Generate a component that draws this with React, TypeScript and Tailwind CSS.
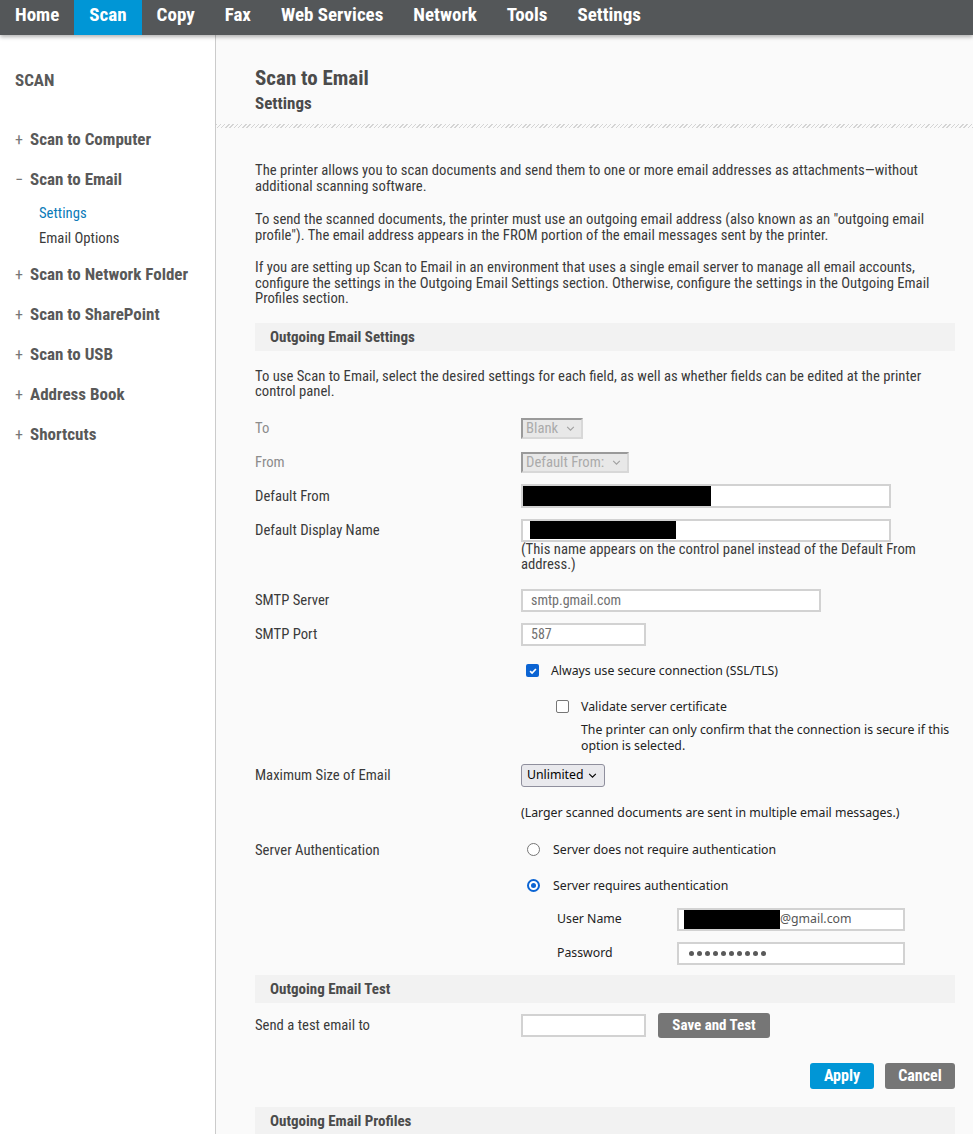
import React from 'react';

const HP: React.CSSProperties = { fontFamily: '"Roboto Condensed", "Noto Sans", "DejaVu Sans Condensed", sans-serif', fontStretch: 'condensed' };
const UI: React.CSSProperties = { fontFamily: '"Noto Sans", "Open Sans", sans-serif', fontStretch: 'normal' };

const NAV = ['Home', 'Scan', 'Copy', 'Fax', 'Web Services', 'Network', 'Tools', 'Settings'];

function Chevron({ className = '' }: { className?: string }) {
  return (
    <svg viewBox="0 0 10 6" className={className} fill="none" stroke="currentColor" strokeWidth="1.3">
      <path d="M1 1l4 4 4-4" />
    </svg>
  );
}

function DisabledSelect({ label, width }: { label: string; width: string }) {
  return (
    <div className={`flex h-[21px] items-center justify-between border-2 border-t-[#9a9a9a] border-l-[#9a9a9a] border-r-[#d8d8d8] border-b-[#d8d8d8] bg-[#e8e8e8] pl-[3px] pr-[6px] text-[14.7px] text-[#ababab] ${width}`}>
      <span>{label}</span>
      <Chevron className="h-[5px] w-[9px] text-[#a0a0a0]" />
    </div>
  );
}

function SectionBar({ title }: { title: string }) {
  return (
    <div className="flex h-[28px] items-center bg-[#f2f2f2] pl-[15px] text-[15px] font-bold text-[#4b4b4b]">
      {title}
    </div>
  );
}

function Row({ label, muted, className = '', children }: { label: string; muted?: boolean; className?: string; children?: React.ReactNode }) {
  return (
    <div className={`flex items-center ${className}`}>
      <div className={`w-[266px] shrink-0 ${muted ? 'text-[#8c8c8c]' : 'text-[#3b3b3b]'}`}>{label}</div>
      {children}
    </div>
  );
}

function Checkbox({ checked }: { checked?: boolean }) {
  return checked ? (
    <span className="flex h-[13px] w-[13px] items-center justify-center rounded-[2px] bg-[#0b64d3]">
      <svg viewBox="0 0 12 12" className="h-[10px] w-[10px]" fill="none" stroke="white" strokeWidth="2">
        <path d="M2.5 6.2l2.4 2.4 4.6-5" />
      </svg>
    </span>
  ) : (
    <span className="h-[13px] w-[13px] rounded-[2px] border border-[#767676] bg-white" />
  );
}

function Radio({ checked }: { checked?: boolean }) {
  return checked ? (
    <span className="flex h-[13px] w-[13px] items-center justify-center rounded-full border-2 border-[#0b64d3] bg-white">
      <span className="h-[5px] w-[5px] rounded-full bg-[#0b64d3]" />
    </span>
  ) : (
    <span className="h-[13px] w-[13px] rounded-full border border-[#767676] bg-white" />
  );
}

const SIDE = [
  { label: 'Scan to Computer' },
  { label: 'Scan to Email', open: true },
  { label: 'Scan to Network Folder' },
  { label: 'Scan to SharePoint' },
  { label: 'Scan to USB' },
  { label: 'Address Book' },
  { label: 'Shortcuts' },
];

export default function App() {
  return (
    <div className="min-h-[1134px] bg-[#fafafa] text-[14.7px] text-[#3b3b3b]" style={HP}>
      {/* top nav */}
      <div className="relative z-10 flex h-[35px] bg-[#545759] shadow-[0_2px_4px_rgba(0,0,0,0.3)]">
        {NAV.map(n => (
          <div key={n}
            className={`flex items-center px-[15px] pb-[5px] text-[19px] font-bold text-white ${n === 'Scan' ? 'bg-[#0096d6]' : ''}`}>
            {n}
          </div>
        ))}
      </div>

      <div className="flex">
        {/* sidebar */}
        <div className="min-h-[1099px] w-[216px] shrink-0 border-r border-[#cbcbcb] bg-white pl-[15px] pt-[34px]">
          <div className="text-[17px] font-bold leading-[22px] text-[#595959]">SCAN</div>
          <div className="mt-[29px]">
            {SIDE.map(s => (
              <div key={s.label}>
                <div className="flex h-[40px] items-center whitespace-nowrap text-[17px] font-bold text-[#595959]">
                  <span className="mr-[5px] w-[10px] text-[16px] font-normal text-[#777]">{s.open ? '−' : '+'}</span>
                  {s.label}
                </div>
                {s.open && (
                  <div className="mb-[5px] pl-[24px]">
                    <div className="flex h-[25px] items-center pt-[2px] text-[#0a7ab8]">Settings</div>
                    <div className="flex h-[25px] items-center pt-[2px] text-[#3b3b3b]">Email Options</div>
                  </div>
                )}
              </div>
            ))}
          </div>
        </div>

        {/* main */}
        <div className="min-w-0 flex-1">
          <div className="px-[39px] pt-[29px]">
            <h1 className="text-[21px] font-bold leading-[28px] text-[#4b4b4b]">Scan to Email</h1>
            <h2 className="text-[17px] font-bold leading-[22px] text-[#4b4b4b]">Settings</h2>
          </div>
          <div className="mt-[10px] h-[4px] bg-[repeating-linear-gradient(135deg,#d4d4d4_0px,#d4d4d4_1px,transparent_1px,transparent_3px)]" />

          <div className="pl-[39px] pr-[18px] pt-[34px] leading-[16px]">
            <p>The printer allows you to scan documents and send them to one or more email addresses as attachments—without additional scanning software.</p>
            <p className="mt-[17px]">To send the scanned documents, the printer must use an outgoing email address (also known as an "outgoing email profile"). The email address appears in the FROM portion of the email messages sent by the printer.</p>
            <p className="mt-[17px] leading-[15.5px]">If you are setting up Scan to Email in an environment that uses a single email server to manage all email accounts, configure the settings in the Outgoing Email Settings section. Otherwise, configure the settings in the Outgoing Email Profiles section.</p>

            <div className="mt-[16px]"><SectionBar title="Outgoing Email Settings" /></div>

            <p className="mt-[18px] leading-[15.5px]">To use Scan to Email, select the desired settings for each field, as well as whether fields can be edited at the printer control panel.</p>

            <Row label="To" muted className="mt-[18px] h-[21px]">
              <DisabledSelect label="Blank" width="w-[62px]" />
            </Row>
            <Row label="From" muted className="mt-[13px] h-[21px]">
              <DisabledSelect label="Default From:" width="w-[108px]" />
            </Row>
            <Row label="Default From" className="mt-[11px] h-[24px]">
              <div className="flex h-[24px] w-[370px] border-2 border-[#d2d2d2] bg-white">
                <div className="h-full w-[188px] bg-black" />
              </div>
            </Row>
            <Row label="Default Display Name" className="mt-[11px] h-[23px]">
              <div className="flex h-[23px] w-[370px] items-center border-2 border-[#d2d2d2] bg-white pl-[7px]">
                <div className="h-[18px] w-[146px] bg-black" />
              </div>
            </Row>
            <div className="ml-[266px] leading-[15.5px]">(This name appears on the control panel instead of the Default From address.)</div>

            <Row label="SMTP Server" className="mt-[16px] h-[23px]">
              <div className="flex h-[23px] w-[300px] items-center border-2 border-[#d2d2d2] bg-white pl-[8px] text-[14px] text-[#707070]">smtp.gmail.com</div>
            </Row>
            <Row label="SMTP Port" className="mt-[11px] h-[23px]">
              <div className="flex h-[23px] w-[125px] items-center border-2 border-[#d2d2d2] bg-white pl-[8px] text-[14px] text-[#707070]">587</div>
            </Row>

            <div className="ml-[266px] mt-[15px] flex h-[20px] items-center gap-[12px] pl-[5px] text-[12.3px] text-[#222]" style={UI}>
              <Checkbox checked />
              <span>Always use secure connection (SSL/TLS)</span>
            </div>
            <div className="ml-[266px] mt-[16px] flex h-[20px] items-center gap-[12px] pl-[35px] text-[12.3px] text-[#222]" style={UI}>
              <Checkbox />
              <span>Validate server certificate</span>
            </div>
            <div className="ml-[326px] mt-[5px] text-[12.3px] leading-[16px] text-[#222]" style={UI}>
              The printer can only confirm that the connection is secure if this option is selected.
            </div>

            <Row label="Maximum Size of Email" className="mt-[10px] h-[23px]">
              <div className="flex h-[23px] w-[84px] items-center justify-between rounded-[3px] border border-[#8f8f9d] bg-[#e9e9ed] pl-[5px] pr-[7px] text-[12.3px] text-black" style={UI}>
                <span>Unlimited</span>
                <Chevron className="h-[5px] w-[9px] text-black" />
              </div>
            </Row>
            <div className="ml-[266px] mt-[18px] h-[16px] text-[12.3px] leading-[16px] text-[#222]" style={UI}>
              (Larger scanned documents are sent in multiple email messages.)
            </div>

            <Row label="Server Authentication" className="mt-[19px] h-[20px]">
              <div className="flex items-center gap-[13px] pl-[6px] text-[12.3px] text-[#222]" style={UI}>
                <Radio />
                <span>Server does not require authentication</span>
              </div>
            </Row>
            <div className="ml-[266px] mt-[16px] flex h-[20px] items-center gap-[13px] pl-[6px] text-[12.3px] text-[#222]" style={UI}>
              <Radio checked />
              <span>Server requires authentication</span>
            </div>
            <div className="ml-[266px] mt-[12px] flex h-[23px] items-center pl-[36px]" style={UI}>
              <div className="w-[120px] text-[12.3px] text-[#222]">User Name</div>
              <div className="flex h-[23px] w-[228px] items-center border-2 border-[#d2d2d2] bg-white pl-[5px] text-[12.3px] text-[#555]">
                <div className="h-[19px] w-[96px] bg-black" />
                <span>@gmail.com</span>
              </div>
            </div>
            <div className="ml-[266px] mt-[11px] flex h-[23px] items-center pl-[36px]" style={UI}>
              <div className="w-[120px] text-[12.3px] text-[#222]">Password</div>
              <div className="flex h-[23px] w-[228px] items-center gap-[3px] border-2 border-[#d2d2d2] bg-white pl-[10px]">
                {Array.from({ length: 10 }).map((_, i) => (
                  <span key={i} className="h-[5px] w-[5px] rounded-full bg-[#5a5a5a]" />
                ))}
              </div>
            </div>

            <div className="mt-[10px]"><SectionBar title="Outgoing Email Test" /></div>

            <Row label="Send a test email to" className="mt-[10px] h-[25px]">
              <div className="h-[23px] w-[125px] border-2 border-[#d2d2d2] bg-white" />
              <button className="ml-[12px] h-[25px] w-[112px] rounded-[3px] bg-[#767676] text-[15px] font-bold text-white">Save and Test</button>
            </Row>

            <div className="mt-[25px] flex justify-end gap-[11px]">
              <button className="h-[26px] w-[64px] rounded-[3px] bg-[#0096d6] text-[16px] font-bold text-white">Apply</button>
              <button className="h-[26px] w-[70px] rounded-[3px] bg-[#767676] text-[16px] font-bold text-white">Cancel</button>
            </div>

            <div className="mt-[18px]"><SectionBar title="Outgoing Email Profiles" /></div>
          </div>
        </div>
      </div>
    </div>
  );
}
